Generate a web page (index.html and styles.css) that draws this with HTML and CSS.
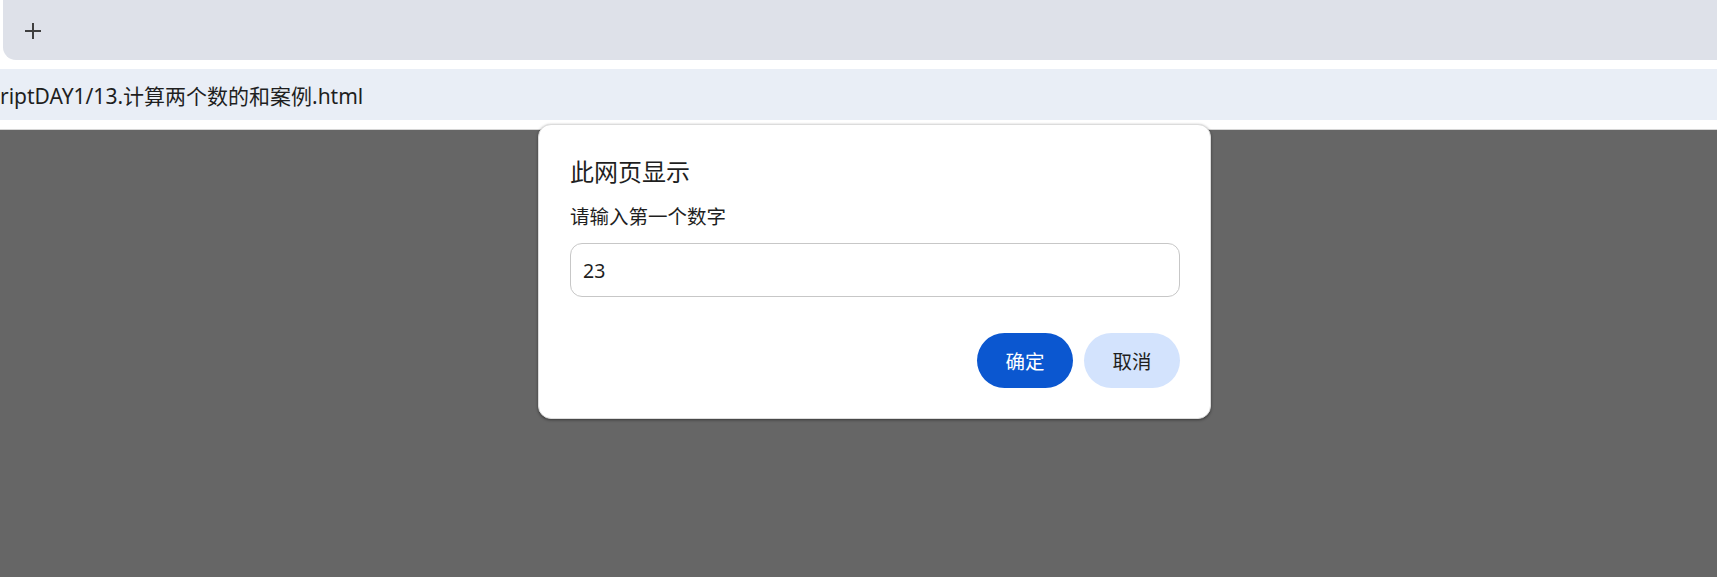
FILE: index.html
```html
<!DOCTYPE html>
<html lang="zh-CN">
<head>
<meta charset="utf-8">
<title>prompt</title>
<link rel="stylesheet" href="styles.css">
</head>
<body>
<div class="browser">
  <div class="tabstrip">
    <div class="tab-edge"></div>
    <div class="tabstrip-main">
      <button class="newtab" aria-label="新标签页">
        <svg width="16" height="16" viewBox="0 0 16 16" shape-rendering="crispEdges"><path d="M7 0h2v16h-2zM0 7h16v2h-16z" fill="#3f3f3f"/></svg>
      </button>
    </div>
  </div>
  <div class="spacer"></div>
  <div class="addressbar"><span class="url">riptDAY1/13.计算两个数的和案例.html</span></div>
  <div class="toolbar-foot"></div>
  <div class="content">
    <div class="dialog" role="dialog">
      <div class="dialog-title">此网页显示</div>
      <div class="dialog-msg">请输入第一个数字</div>
      <div class="dialog-input">23</div>
      <div class="dialog-actions">
        <button class="btn btn-primary">确定</button>
        <button class="btn btn-secondary">取消</button>
      </div>
    </div>
  </div>
</div>
</body>
</html>
```

FILE: styles.css
```css
* { box-sizing: border-box; }
html, body {
  margin: 0;
  padding: 0;
  width: 1717px;
  height: 577px;
  overflow: hidden;
  background: #666666;
  font-family: "Noto Sans", "Noto Sans CJK SC", sans-serif;
  color: #1f1f1f;
}
.browser {
  display: flex;
  flex-direction: column;
  height: 577px;
}
.tabstrip {
  display: flex;
  height: 60px;
  background: #ffffff;
}
.tab-edge {
  width: 3px;
  background: #ffffff;
}
.tabstrip-main {
  flex: 1;
  background: #dee1e9;
  border-bottom-left-radius: 13px;
  display: flex;
  align-items: center;
  padding-left: 22px;
}
.newtab {
  border: 0;
  background: transparent;
  padding: 0;
  width: 16px;
  height: 16px;
  display: flex;
  margin-top: 1px;
}
.spacer {
  height: 9px;
  background: #ffffff;
}
.addressbar {
  height: 51px;
  background: #e9eef6;
  display: flex;
  align-items: center;
  padding-left: 0;
}
.url {
  font-size: 21px;
  line-height: 28px;
  color: #1f1f1f;
  margin-top: 3px;
}
.toolbar-foot {
  height: 10px;
  background: #ffffff;
  border-bottom: 1px solid #d6d6d6;
}
.content {
  flex: 1;
  background: #666666;
  position: relative;
}
.dialog {
  position: absolute;
  left: 538px;
  top: -6px;
  width: 673px;
  height: 295px;
  background: #ffffff;
  border: 1px solid #dcdcdc;
  border-radius: 13px;
  box-shadow: 0 1px 3px rgba(0,0,0,0.45);
  padding: 31px 30px 30px 31px;
  display: flex;
  flex-direction: column;
}
.dialog-title {
  font-size: 24px;
  line-height: 32px;
  color: #1f1f1f;
}
.dialog-msg {
  margin-top: 15px;
  font-size: 19.5px;
  line-height: 27px;
  color: #1f1f1f;
}
.dialog-input {
  margin-top: 13px;
  height: 54px;
  border: 1.5px solid #c7c7c7;
  border-radius: 12px;
  padding-left: 12px;
  font-size: 19.5px;
  display: flex;
  align-items: center;
  color: #1f1f1f;
}
.dialog-actions {
  margin-top: 36px;
  display: flex;
  justify-content: flex-end;
  gap: 11px;
}
.btn {
  width: 96px;
  height: 55px;
  border: 0;
  border-radius: 28px;
  font-family: "Noto Sans CJK SC", sans-serif;
  font-size: 19.5px;
  padding: 0;
}
.btn-primary {
  background: #0b57d0;
  color: #ffffff;
}
.btn-secondary {
  background: #d3e3fd;
  color: #1f1f1f;
}
```
